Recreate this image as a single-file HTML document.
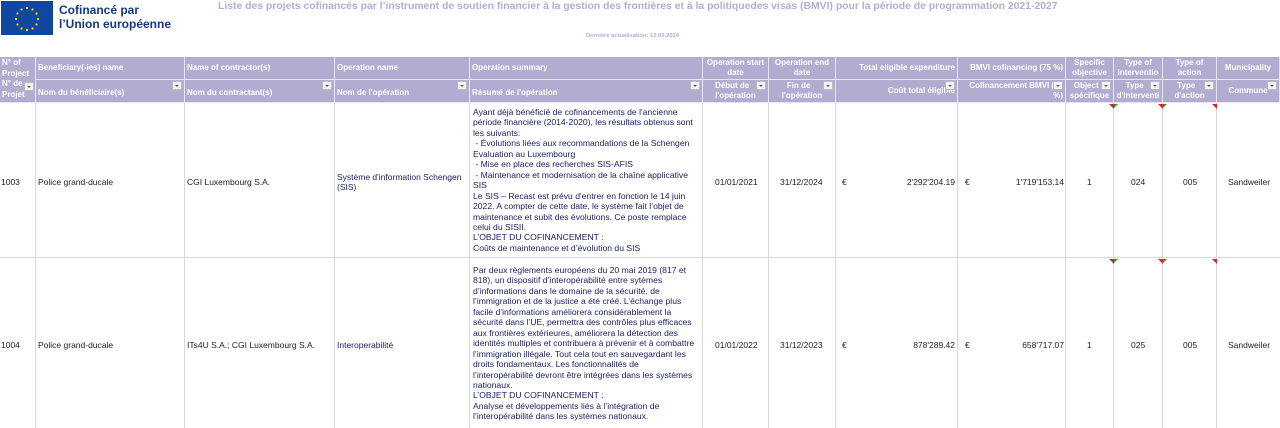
<!DOCTYPE html>
<html><head><meta charset="utf-8"><style>
*{margin:0;padding:0;box-sizing:border-box}
body{width:1280px;height:428px;overflow:hidden;background:#fff;font-family:"Liberation Sans",Arial,sans-serif;position:relative}
.a{position:absolute}
.h{position:absolute;background:#b1acd0;color:#fff;font-weight:bold;font-size:8px;line-height:10px;border-right:1px solid #e6e4ef;border-bottom:1px solid #e6e4ef;padding:2px 2px;overflow:hidden;white-space:nowrap}
.dd{position:absolute;width:10px;height:9px;background:#f2f2f2;border:1px solid #bbb;top:1px;right:2px}
.dd:after{content:"";position:absolute;left:2px;top:3px;border-left:2.5px solid transparent;border-right:2.5px solid transparent;border-top:2.5px solid #666}
.s{font-size:8.6px;line-height:10.45px;color:#1f2160;white-space:nowrap}
.tri{position:absolute;width:0;height:0;border-left:5px solid transparent;border-top:5px solid #e02020}
.trg{position:absolute;width:0;height:0;border-right:4px solid transparent;border-top:4px solid #2a9a2a}
</style></head><body>
<div class="a" style="left:1px;top:1px;width:52px;height:34px;background:#0f47a1"></div>
<svg class="a" style="left:1px;top:1px" width="52" height="34">
<g fill="#ffdd00">
<circle cx="26" cy="7" r="1.1"/><circle cx="31.5" cy="8.5" r="1.1"/><circle cx="35.5" cy="12.5" r="1.1"/><circle cx="37" cy="18" r="1.1"/><circle cx="35.5" cy="23.5" r="1.1"/><circle cx="31.5" cy="27.5" r="1.1"/><circle cx="26" cy="29" r="1.1"/><circle cx="20.5" cy="27.5" r="1.1"/><circle cx="16.5" cy="23.5" r="1.1"/><circle cx="15" cy="18" r="1.1"/><circle cx="16.5" cy="12.5" r="1.1"/><circle cx="20.5" cy="8.5" r="1.1"/>
</g></svg>
<div class="a" style="left:59px;top:3px;font-size:12px;line-height:14px;font-weight:bold;color:#123a82">Cofinancé par<br>l’Union européenne</div>
<div class="a" style="left:218px;top:1px;font-size:10.4px;font-weight:bold;color:#b4acd2;white-space:nowrap">Liste des projets cofinancés par l’instrument de soutien financier à la gestion des frontières et à la politiquedes visas (BMVI) pour la période de programmation 2021-2027</div>
<div class="a" style="left:586px;top:33px;font-size:5.8px;color:#b4acd2;font-weight:bold">Dernière actualisation: 12.03.2024</div>

<div class="h" style="left:0;top:57px;width:36px;height:46px;line-height:10.5px;padding-top:1px">N° of<br>Project<br>N° de<br>Projet<span class="dd" style="top:25px;right:1px"></span></div>
<div class="h" style="left:36px;top:57px;width:149px;height:23px;padding-top:6px">Beneficiary(-ies) name</div>
<div class="h" style="left:185px;top:57px;width:150px;height:23px;padding-top:6px">Name of contractor(s)</div>
<div class="h" style="left:335px;top:57px;width:135px;height:23px;padding-top:6px">Operation name</div>
<div class="h" style="left:470px;top:57px;width:233px;height:23px;padding-top:6px">Operation summary</div>
<div class="h" style="left:703px;top:57px;width:66px;height:23px;text-align:center;padding-top:1px">Operation start<br>date</div>
<div class="h" style="left:769px;top:57px;width:67px;height:23px;text-align:center;padding-top:1px">Operation end<br>date</div>
<div class="h" style="left:836px;top:57px;width:122px;height:23px;text-align:right;padding-top:6px">Total eligible expenditure</div>
<div class="h" style="left:958px;top:57px;width:108px;height:23px;text-align:right;padding-top:6px">BMVI cofinancing (75 %)</div>
<div class="h" style="left:1066px;top:57px;width:48px;height:23px;text-align:center;padding-top:1px">Specific<br>objective</div>
<div class="h" style="left:1114px;top:57px;width:49px;height:23px;text-align:center;padding-top:1px">Type of<br>interventio</div>
<div class="h" style="left:1163px;top:57px;width:54px;height:23px;text-align:center;padding-top:1px">Type of<br>action</div>
<div class="h" style="left:1217px;top:57px;width:63px;height:23px;text-align:center;padding-top:6px">Municipality</div>
<div class="h" style="left:36px;top:80px;width:149px;height:23px;padding-top:8px">Nom du bénéficiaire(s)<span class="dd"></span></div>
<div class="h" style="left:185px;top:80px;width:150px;height:23px;padding-top:8px">Nom du contractant(s)<span class="dd"></span></div>
<div class="h" style="left:335px;top:80px;width:135px;height:23px;padding-top:8px">Nom de l'opération<span class="dd"></span></div>
<div class="h" style="left:470px;top:80px;width:233px;height:23px;padding-top:8px">Résumé de l'opération<span class="dd"></span></div>
<div class="h" style="left:703px;top:80px;width:66px;height:23px;text-align:center;padding-top:1px">Début de&nbsp;&nbsp;&nbsp;<br>l'opération<span class="dd"></span></div>
<div class="h" style="left:769px;top:80px;width:67px;height:23px;text-align:center;padding-top:1px">Fin de&nbsp;&nbsp;&nbsp;<br>l'opération<span class="dd"></span></div>
<div class="h" style="left:836px;top:80px;width:122px;height:23px;text-align:right;padding-top:6px">Coût total éligible<span class="dd"></span></div>
<div class="h" style="left:958px;top:80px;width:108px;height:23px;text-align:right;padding-top:1px">Cofinancement BMVI (&nbsp;&nbsp;&nbsp;&nbsp;<br>%)<span class="dd"></span></div>
<div class="h" style="left:1066px;top:80px;width:48px;height:23px;text-align:center;padding-top:1px">Object&nbsp;&nbsp;&nbsp;<br>spécifique<span class="dd"></span></div>
<div class="h" style="left:1114px;top:80px;width:49px;height:23px;text-align:center;padding-top:1px">Type&nbsp;&nbsp;&nbsp;<br>d'interventi<span class="dd"></span></div>
<div class="h" style="left:1163px;top:80px;width:54px;height:23px;text-align:center;padding-top:1px">Type&nbsp;&nbsp;&nbsp;<br>d'action<span class="dd"></span></div>
<div class="h" style="left:1217px;top:80px;width:63px;height:23px;text-align:center;padding-top:6px">Commune<span class="dd"></span></div>

<div class="a" style="left:0;top:103px;width:1280px;height:155px;border-bottom:1px solid #d8d8d8"></div>
<div class="a" style="left:35px;top:103px;width:1px;height:325px;background:#d8d8d8"></div>
<div class="a" style="left:184px;top:103px;width:1px;height:325px;background:#d8d8d8"></div>
<div class="a" style="left:334px;top:103px;width:1px;height:325px;background:#d8d8d8"></div>
<div class="a" style="left:469px;top:103px;width:1px;height:325px;background:#d8d8d8"></div>
<div class="a" style="left:702px;top:103px;width:1px;height:325px;background:#d8d8d8"></div>
<div class="a" style="left:768px;top:103px;width:1px;height:325px;background:#d8d8d8"></div>
<div class="a" style="left:835px;top:103px;width:1px;height:325px;background:#d8d8d8"></div>
<div class="a" style="left:957px;top:103px;width:1px;height:325px;background:#d8d8d8"></div>
<div class="a" style="left:1065px;top:103px;width:1px;height:325px;background:#d8d8d8"></div>
<div class="a" style="left:1113px;top:103px;width:1px;height:325px;background:#d8d8d8"></div>
<div class="a" style="left:1162px;top:103px;width:1px;height:325px;background:#d8d8d8"></div>
<div class="a" style="left:1216px;top:103px;width:1px;height:325px;background:#d8d8d8"></div>

<div class="tri" style="left:1109px;top:104px"></div><div class="trg" style="left:1114px;top:104px"></div>
<div class="tri" style="left:1158px;top:104px"></div><div class="trg" style="left:1163px;top:104px"></div>
<div class="tri" style="left:1212px;top:104px"></div>
<div class="tri" style="left:1109px;top:259px"></div><div class="trg" style="left:1114px;top:259px"></div>
<div class="tri" style="left:1158px;top:259px"></div><div class="trg" style="left:1163px;top:259px"></div>
<div class="tri" style="left:1212px;top:259px"></div>

<div class="a" style="top:177px;left:0;width:1280px;font-size:8.5px;color:#222;line-height:10px">
<span class="a" style="left:1px">1003</span>
<span class="a" style="left:38px">Police grand-ducale</span>
<span class="a" style="left:187px">CGI Luxembourg S.A.</span>
<span class="a" style="left:715px">01/01/2021</span>
<span class="a" style="left:780px">31/12/2024</span>
<span class="a" style="left:842px">€</span>
<span class="a" style="right:325px">2'292'204.19</span>
<span class="a" style="left:965px">€</span>
<span class="a" style="right:216px">1'719'153.14</span>
<span class="a" style="left:1087px">1</span>
<span class="a" style="left:1131px">024</span>
<span class="a" style="left:1183px">005</span>
<span class="a" style="left:1228px">Sandweiler</span>
</div>
<div class="a" style="left:337px;top:172px;font-size:8.5px;line-height:10px;color:#1f2160">Système d'information Schengen<br>(SIS)</div>
<div class="a s" style="left:473px;top:107px">Ayant déjà bénéficié de cofinancements de l'ancienne<br>période financière (2014-2020), les résultats obtenus sont<br>les suivants:<br>&nbsp;- Évolutions liées aux recommandations de la Schengen<br>Evaluation au Luxembourg<br>&nbsp;- Mise en place des recherches SIS-AFIS<br>&nbsp;- Maintenance et modernisation de la chaîne applicative<br>SIS<br>Le SIS – Recast est prévu d'entrer en fonction le 14 juin<br>2022. A compter de cette date, le système fait l’objet de<br>maintenance et subit des évolutions. Ce poste remplace<br>celui du SISII.<br>L’OBJET DU COFINANCEMENT :<br>Coûts de maintenance et d’évolution du SIS</div>

<div class="a" style="top:340px;left:0;width:1280px;font-size:8.5px;color:#222;line-height:10px">
<span class="a" style="left:1px">1004</span>
<span class="a" style="left:38px">Police grand-ducale</span>
<span class="a" style="left:187px">ITs4U S.A.; CGI Luxembourg S.A.</span>
<span class="a" style="left:337px;color:#1f2160">Interoperabilité</span>
<span class="a" style="left:715px">01/01/2022</span>
<span class="a" style="left:780px">31/12/2023</span>
<span class="a" style="left:842px">€</span>
<span class="a" style="right:325px">878'289.42</span>
<span class="a" style="left:965px">€</span>
<span class="a" style="right:216px">658'717.07</span>
<span class="a" style="left:1087px">1</span>
<span class="a" style="left:1131px">025</span>
<span class="a" style="left:1183px">005</span>
<span class="a" style="left:1228px">Sandweiler</span>
</div>
<div class="a s" style="left:473px;top:265px">Par deux règlements européens du 20 mai 2019 (817 et<br>818), un dispositif d’interopérabilité entre sytèmes<br>d’informations dans le domaine de la sécurité, de<br>l’immigration et de la justice a été créé. L’échange plus<br>facile d’informations améliorera considérablement la<br>sécurité dans l’UE, permettra des contrôles plus efficaces<br>aux frontières extérieures, améliorera la détection des<br>identités multiples et contribuera à prévenir et à combattre<br>l’immigration illégale. Tout cela tout en sauvegardant les<br>droits fondamentaux. Les fonctionnalités de<br>l’interopérabilité devront être intégrées dans les systèmes<br>nationaux.<br>L’OBJET DU COFINANCEMENT :<br>Analyse et développements liés à l’intégration de<br>l’interopérabilité dans les systèmes nationaux.</div>
</body></html>
